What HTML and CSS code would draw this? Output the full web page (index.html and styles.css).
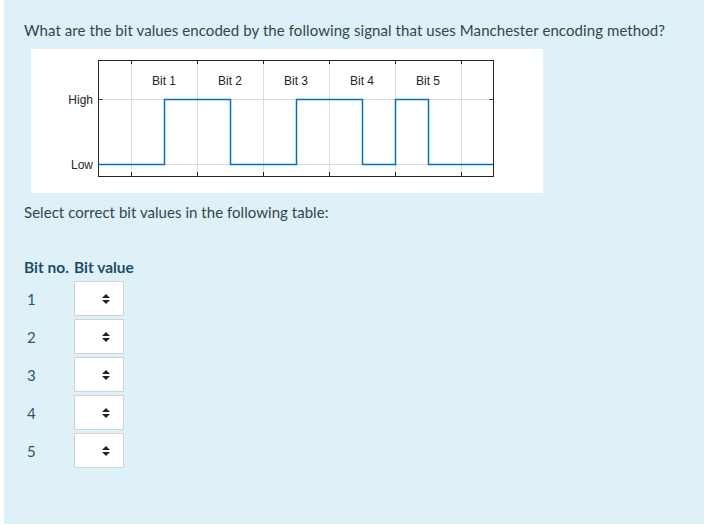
FILE: index.html
```html
<!DOCTYPE html>
<html>
<head>
<meta charset="utf-8">
<link rel="stylesheet" href="styles.css">
</head>
<body>
<div class="que">
  <p class="qtext">What are the bit values encoded by the following signal that uses Manchester encoding method?</p>
  <div class="chart">
    <svg width="512" height="144" viewBox="0 0 512 144" xmlns="http://www.w3.org/2000/svg">
      <g stroke="#dcdcdc" stroke-width="1" fill="none">
        <line x1="100.5" y1="11" x2="100.5" y2="127"/>
        <line x1="166.5" y1="11" x2="166.5" y2="127"/>
        <line x1="232.5" y1="11" x2="232.5" y2="127"/>
        <line x1="298.5" y1="11" x2="298.5" y2="127"/>
        <line x1="364.5" y1="11" x2="364.5" y2="127"/>
        <line x1="430.5" y1="11" x2="430.5" y2="127"/>
        <line x1="67" y1="50.5" x2="462" y2="50.5"/>
        <line x1="67" y1="115.5" x2="462" y2="115.5"/>
      </g>
      <g stroke="#262626" stroke-width="1" fill="none">
        <path d="M100.5 11v4M166.5 11v4M232.5 11v4M298.5 11v4M364.5 11v4M430.5 11v4"/>
        <path d="M100.5 127v-4M166.5 127v-4M232.5 127v-4M298.5 127v-4M364.5 127v-4M430.5 127v-4"/>
        <path d="M67.5 50.5h4M67.5 115.5h4M462.5 50.5h-4M462.5 115.5h-4"/>
        <rect x="67.5" y="11.5" width="395" height="116"/>
      </g>
      <path d="M67 115.5H133.5V50.5H199.5V115.5H265.5V50.5H331.5V115.5H364.5V50.5H397.5V115.5H462" stroke="#0072bd" stroke-width="1.5" fill="none"/>
      <g font-family="Liberation Sans, Arial, sans-serif" font-size="12" fill="#262626" text-anchor="middle">
        <text x="133" y="36">Bit 1</text>
        <text x="199" y="36">Bit 2</text>
        <text x="265" y="36">Bit 3</text>
        <text x="331" y="36">Bit 4</text>
        <text x="397" y="36">Bit 5</text>
      </g>
      <g font-family="Liberation Sans, Arial, sans-serif" font-size="12" fill="#262626" text-anchor="end">
        <text x="62" y="55">High</text>
        <text x="62" y="120">Low</text>
      </g>
    </svg>
  </div>
  <p class="instr">Select correct bit values in the following table:</p>
  <div class="bits">
    <div class="head">Bit no.</div><div class="head">Bit value</div>
    <div class="num">1</div><div class="sel"><svg class="arr" width="8" height="10" viewBox="0 0 8 10"><path d="M4 0L8 4H0Z M0 6H8L4 10Z" fill="#222"/></svg></div>
    <div class="num">2</div><div class="sel"><svg class="arr" width="8" height="10" viewBox="0 0 8 10"><path d="M4 0L8 4H0Z M0 6H8L4 10Z" fill="#222"/></svg></div>
    <div class="num">3</div><div class="sel"><svg class="arr" width="8" height="10" viewBox="0 0 8 10"><path d="M4 0L8 4H0Z M0 6H8L4 10Z" fill="#222"/></svg></div>
    <div class="num">4</div><div class="sel"><svg class="arr" width="8" height="10" viewBox="0 0 8 10"><path d="M4 0L8 4H0Z M0 6H8L4 10Z" fill="#222"/></svg></div>
    <div class="num">5</div><div class="sel"><svg class="arr" width="8" height="10" viewBox="0 0 8 10"><path d="M4 0L8 4H0Z M0 6H8L4 10Z" fill="#222"/></svg></div>
  </div>
</div>
</body>
</html>
```
FILE: styles.css
```css
html, body {
  margin: 0;
  padding: 0;
  background: #ffffff;
}
body {
  font-family: Lato, "Open Sans", sans-serif;
  color: #36444b;
}
.que {
  margin-left: 4px;
  background: #def1f8;
  height: 524px;
  padding: 20px 20px 0 20px;
  box-sizing: border-box;
}
.qtext {
  margin: 0;
  font-size: 15px;
  line-height: 21px;
  letter-spacing: 0.08px;
  white-space: nowrap;
}
.chart {
  margin: 8px 0 0 7px;
  width: 512px;
  height: 144px;
  background: #ffffff;
}
.chart svg {
  display: block;
}
.instr {
  margin: 9px 0 0 0;
  font-size: 15px;
  line-height: 21px;
  letter-spacing: 0.04px;
}
.bits {
  margin-top: 33px;
  display: grid;
  grid-template-columns: 50px 50px;
  grid-auto-rows: 35px;
  grid-template-rows: 22px;
  row-gap: 3px;
  column-gap: 0;
  font-size: 15px;
}
.head {
  font-weight: bold;
  font-size: 15.5px;
  color: #1f4e66;
  line-height: 22px;
  white-space: nowrap;
}
.num {
  display: flex;
  align-items: center;
  padding-left: 3px;
  color: #2f566b;
  padding-top: 1px;
}
.sel {
  background: #fff;
  border: 1px solid #ced4da;
  box-sizing: border-box;
  display: flex;
  align-items: center;
  justify-content: flex-end;
  padding-right: 13px;
}
.arr {
  display: block;
}
```
